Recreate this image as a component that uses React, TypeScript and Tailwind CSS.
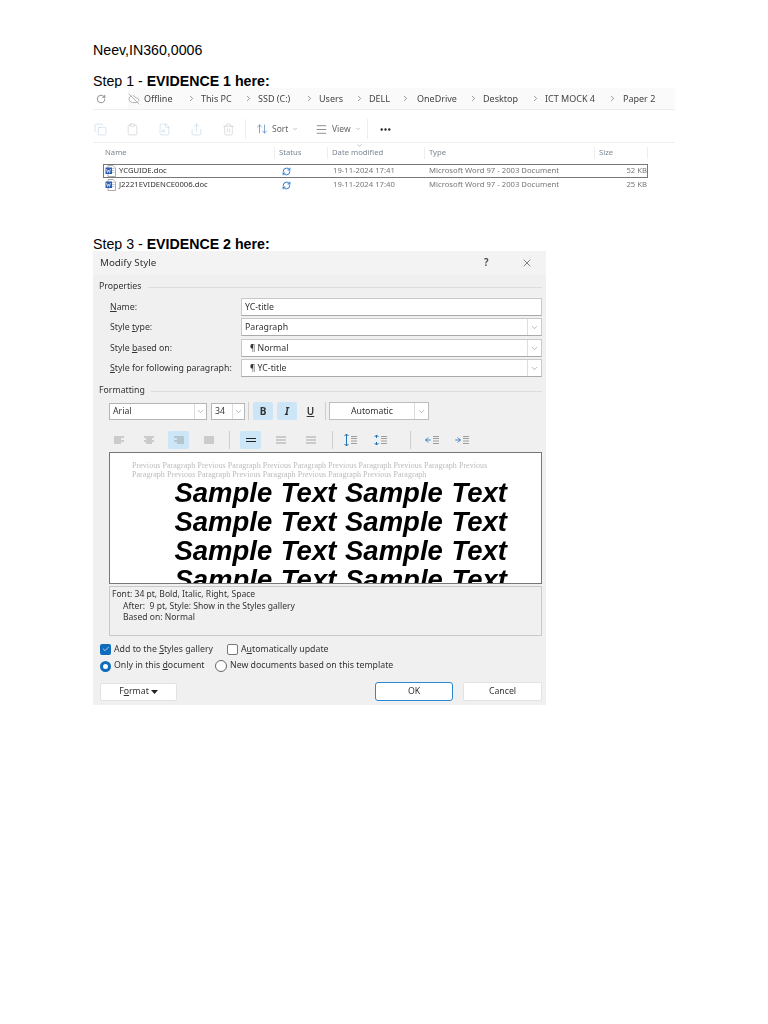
import React from "react";
import { RotateCw, CloudOff, ChevronRight, ChevronDown, Copy, Clipboard, Share, Trash2, ArrowUpDown, Menu, MoreHorizontal, RefreshCw, X, Check, FileInput, ArrowLeft, ArrowRight } from "lucide-react";

const ui = "font-['Noto_Sans','Open_Sans',sans-serif]";

function Sep() {
  return <ChevronRight className="w-[9px] h-[9px] text-[#555] shrink-0" strokeWidth={1.6} />;
}

function Crumb({ w, children }: { w: string; children: React.ReactNode }) {
  return <span className={`${w} whitespace-nowrap`}>{children}</span>;
}

function WordIcon() {
  return (
    <svg width="11" height="12" viewBox="0 0 11 12" className="shrink-0">
      <path d="M3 .5h5l2.5 2.5v8.5H3z" fill="#fff" stroke="#8a8a8a" strokeWidth="0.7" />
      <path d="M6.5 3.5h3M6.5 5.5h3M6.5 7.5h3" stroke="#9db4d8" strokeWidth="0.7" />
      <rect x="0.5" y="2.5" width="6.5" height="6.5" fill="#2b5fb5" />
      <path d="M1.5 4l1 3.5 1-2.5 1 2.5 1-3.5" stroke="#fff" strokeWidth="0.7" fill="none" />
    </svg>
  );
}

function FileRow({ name, date, size, selected }: { name: string; date: string; size: string; selected?: boolean }) {
  return (
    <div className={`grid grid-cols-[172px_53px_97px_170px_52px] items-center h-[14px] w-[545px] border ${selected ? "border-[#777]" : "border-transparent"}`}>
      <div className="flex items-center gap-[3px] pl-[1px] text-[#333]">
        <WordIcon />
        <span className="whitespace-nowrap">{name}</span>
      </div>
      <div className="pl-[6px]">
        <RefreshCw className="w-[9px] h-[9px] text-[#1c6fc9]" strokeWidth={2.4} />
      </div>
      <span className="pl-[4px] text-[#777] whitespace-nowrap">{date}</span>
      <span className="pl-[3px] text-[#777] whitespace-nowrap">Microsoft Word 97 - 2003 Document</span>
      <span className="pr-[1px] text-right text-[#777] whitespace-nowrap">{size}</span>
    </div>
  );
}

function Explorer() {
  const tool = "w-[13px] h-[13px] text-[#b9cfe6]";
  const grey = "w-[13px] h-[13px] text-[#c4c4c4]";
  return (
    <div className={`w-[582px] h-[117px] bg-white ${ui} text-[7.7px] blur-[0.25px]`}>
      <div className="flex items-center h-[22px] bg-[#fafafa] border-b border-[#eee] text-[9px] text-[#444]">
        <div className="w-[35px] pl-[3px] h-full flex items-center bg-white">
          <RotateCw className="w-[10px] h-[10px] text-[#555]" strokeWidth={1.5} />
        </div>
        <div className="flex items-center gap-[4px] w-[59px]">
          <CloudOff className="w-[12px] h-[12px] text-[#777]" strokeWidth={1} />
          <span>Offline</span>
        </div>
        <div className="w-[14px]"><Sep /></div>
        <Crumb w="w-[43px]">This PC</Crumb>
        <div className="w-[14px]"><Sep /></div>
        <Crumb w="w-[47px]">SSD (C:)</Crumb>
        <div className="w-[14px]"><Sep /></div>
        <Crumb w="w-[36px]">Users</Crumb>
        <div className="w-[14px]"><Sep /></div>
        <Crumb w="w-[32px]">DELL</Crumb>
        <div className="w-[16px]"><Sep /></div>
        <Crumb w="w-[52px]">OneDrive</Crumb>
        <div className="w-[14px]"><Sep /></div>
        <Crumb w="w-[48px]">Desktop</Crumb>
        <div className="w-[14px]"><Sep /></div>
        <Crumb w="w-[63px]">ICT MOCK 4</Crumb>
        <div className="w-[15px]"><Sep /></div>
        <Crumb w="w-[40px]">Paper 2</Crumb>
      </div>
      <div className="flex items-center h-[33px] pt-[6px] border-b border-[#eee] text-[#666] text-[8.5px]">
        <div className="flex items-center gap-[19px] pl-[1px] w-[152px]">
          <Copy className={tool} strokeWidth={1} />
          <Clipboard className={grey} strokeWidth={1} />
          <FileInput className={tool} strokeWidth={1} />
          <Share className={tool} strokeWidth={1} />
          <Trash2 className={grey} strokeWidth={1} />
        </div>
        <div className="flex items-center gap-[4px] w-[59px] pl-[10px] border-l border-[#eee] h-[20px] box-content">
          <ArrowUpDown className="w-[12px] h-[12px] text-[#2f6db5]" strokeWidth={1.2} />
          <span>Sort</span>
          <ChevronDown className="w-[6px] h-[6px] text-[#888]" />
        </div>
        <div className="flex items-center gap-[4px] w-[52px] h-[20px]">
          <Menu className="w-[13px] h-[13px] text-[#555]" strokeWidth={1.2} />
          <span>View</span>
          <ChevronDown className="w-[6px] h-[6px] text-[#888]" />
        </div>
        <div className="flex items-center pl-[11px] h-[20px] border-l border-[#eee]">
          <MoreHorizontal className="w-[13px] h-[13px] text-[#222]" strokeWidth={2.4} />
        </div>
      </div>
      <div className="relative grid grid-cols-[172px_53px_97px_170px_53px] items-center h-[20px] pl-[10px] text-[#7a8794]">
        <ChevronDown className="absolute left-[263px] -top-[1px] w-[7px] h-[7px] text-[#999]" />
        <span className="pl-[2px] border-r border-[#eee]">Name</span>
        <span className="pl-[4px] border-r border-[#eee]">Status</span>
        <span className="pl-[4px] border-r border-[#eee]">Date modified</span>
        <span className="pl-[4px] border-r border-[#eee]">Type</span>
        <span className="pl-[4px] border-r border-[#eee]">Size</span>
      </div>
      <div className="pl-[10px] pt-[1px]">
        <FileRow selected name="YCGUIDE.doc" date="19-11-2024 17:41" size="52 KB" />
        <FileRow name="J2221EVIDENCE0006.doc" date="19-11-2024 17:40" size="25 KB" />
      </div>
    </div>
  );
}

function Heading({ children }: { children: React.ReactNode }) {
  return (
    <div className="flex items-center gap-[6px] h-[12px] pl-[6px] pr-[4px] text-[#333]">
      <span>{children}</span>
      <div className="flex-1 h-px bg-[#dcdcdc]" />
    </div>
  );
}

function Caret({ w = "w-[14px]" }: { w?: string }) {
  return (
    <div className={`${w} self-stretch flex items-center justify-center bg-white border-l border-[#ddd]`}>
      <ChevronDown className="w-[9px] h-[9px] text-[#666]" strokeWidth={1.2} />
    </div>
  );
}

function PropRow({ label, value, select }: { label: React.ReactNode; value: React.ReactNode; select?: boolean }) {
  return (
    <div className="flex items-center">
      <span className="w-[148px] pl-[17px] pt-[1px] text-[#333] whitespace-nowrap">{label}</span>
      <div className="w-[301px] h-[18px] flex items-center bg-white border border-[#c9c9c9] border-b-[#aaa]">
        <span className="flex-1 pl-[3px] pt-[1px] text-[#333]">{value}</span>
        {select && <Caret />}
      </div>
    </div>
  );
}

type LineKind = "left" | "center" | "right" | "justify" | "s1" | "s2" | "s3";

function Lines({ kind }: { kind: LineKind }) {
  const rows: Record<LineKind, string> = {
    left: "M1 2h10M1 4h7M1 6h10M1 8h7",
    center: "M1 2h10M3 4h6M1 6h10M3 8h6",
    right: "M1 2h10M4 4h7M1 6h10M4 8h7",
    justify: "M1 2h10M1 4h10M1 6h10M1 8h10",
    s1: "M1 3.5h10M1 6.5h10",
    s2: "M1 2h10M1 5h10M1 8h10",
    s3: "M1 2h10M1 5h10M1 8h10",
  };
  const dark = kind === "s1" ? "#222" : "#888";
  return (
    <svg width="12" height="10" viewBox="0 0 12 10">
      <path d={rows[kind]} stroke={dark} strokeWidth={kind === "s1" ? 1.2 : 0.7} fill="none" />
    </svg>
  );
}

function Align({ kind, on }: { kind: LineKind; on?: boolean }) {
  return (
    <div className={`w-[21px] h-[18px] flex items-center justify-center rounded-[2px] ${on ? "bg-[#cde6f7]" : ""}`}>
      <Lines kind={kind} />
    </div>
  );
}

function VSep() {
  return <div className="w-px h-[18px] bg-[#cfcfcf]" />;
}

function MiniLines() {
  return (
    <svg width="8" height="10" viewBox="0 0 8 10">
      <path d="M1 1.5h6M1 3.5h6M1 6h6M1 8.5h6" stroke="#888" strokeWidth="0.8" />
    </svg>
  );
}

function Dialog() {
  return (
    <div className={`w-[453px] h-[454px] bg-[#f0f0f0] ${ui} text-[8.75px] blur-[0.25px]`}>
      <div className="flex items-center h-[24px] bg-[#f3f3f3] pl-[7px] text-[#333] text-[9.8px]">
        <span className="flex-1">Modify Style</span>
        <span className="w-[37px] font-semibold text-[#444]">?</span>
        <X className="w-[12px] h-[12px] text-[#333] mr-[13px]" strokeWidth={1.2} />
      </div>
      <div className="pt-[6px]">
        <Heading>Properties</Heading>
      </div>
      <div className="flex flex-col gap-[2px] pt-[5px]">
        <PropRow label={<><u>N</u>ame:</>} value="YC-title" />
        <div className="mb-[1px]">
          <PropRow label={<>Style <u>t</u>ype:</>} value="Paragraph" select />
        </div>
        <PropRow label={<>Style <u>b</u>ased on:</>} value={<span className="pl-[5px]"><span className="text-[8px]">¶</span> Normal</span>} select />
        <PropRow label={<><u>S</u>tyle for following paragraph:</>} value={<span className="pl-[5px]"><span className="text-[8px]">¶</span> YC-title</span>} select />
      </div>
      <div className="pt-[8px]">
        <Heading>Formatting</Heading>
      </div>
      <div className="flex items-center h-[18px] mt-[5px] ml-[16px] text-[#333]">
        <div className="flex items-center w-[98px] h-[17px] bg-white border border-[#b5b5b5]">
          <span className="flex-1 pl-[3px] pt-[1px]">Arial</span>
          <Caret w="w-[12px]" />
        </div>
        <div className="flex items-center w-[34px] h-[17px] ml-[4px] bg-white border border-[#b5b5b5]">
          <span className="flex-1 pl-[3px] pt-[1px]">34</span>
          <Caret w="w-[12px]" />
        </div>
        <div className="ml-[3px] mr-[4px]"><VSep /></div>
        <div className="w-[20px] h-[18px] bg-[#cde6f7] rounded-[2px] flex items-center justify-center font-bold text-[10px]">B</div>
        <div className="ml-[4px] w-[20px] h-[18px] bg-[#cde6f7] rounded-[2px] flex items-center justify-center font-bold italic text-[10px]">I</div>
        <div className="ml-[4px] w-[19px] h-[18px] flex items-center justify-center font-semibold text-[10px] underline">U</div>
        <div className="ml-[5px] mr-[3px]"><VSep /></div>
        <div className="flex items-center w-[100px] h-[18px] bg-white border border-[#bdbdbd]">
          <span className="flex-1 text-center pt-[1px]">Automatic</span>
          <Caret />
        </div>
      </div>
      <div className="flex items-center h-[18px] mt-[11px] ml-[15px]">
        <div className="flex items-center gap-[9px]">
          <Align kind="left" />
          <Align kind="center" />
          <Align kind="right" on />
          <Align kind="justify" />
        </div>
        <div className="ml-[10px] mr-[10px]"><VSep /></div>
        <div className="flex items-center gap-[9px]">
          <Align kind="s1" on />
          <Align kind="s2" />
          <Align kind="s3" />
        </div>
        <div className="ml-[11px]"><VSep /></div>
        <div className="flex items-center gap-[14px] ml-[10px]">
          <div className="w-[16px] flex items-center justify-center gap-px">
            <svg width="5" height="14" viewBox="0 0 5 14"><path d="M2.5 1v12M.5 3l2-2 2 2M.5 11l2 2 2-2" stroke="#1f6fb5" fill="none" /></svg>
            <MiniLines />
          </div>
          <div className="w-[16px] flex items-center justify-center gap-px">
            <svg width="5" height="12" viewBox="0 0 5 12"><path d="M2.5 1v3M2.5 8v3M.5 3l2-2 2 2M.5 9l2 2 2-2" stroke="#1f6fb5" fill="none" /></svg>
            <MiniLines />
          </div>
        </div>
        <div className="ml-[21px]"><VSep /></div>
        <div className="flex items-center gap-[14px] ml-[13px]">
          <div className="w-[16px] flex items-center"><ArrowLeft className="w-[8px] h-[8px] text-[#1f6fb5]" strokeWidth={2.5} /><MiniLines /></div>
          <div className="w-[16px] flex items-center"><ArrowRight className="w-[8px] h-[8px] text-[#1f6fb5]" strokeWidth={2.5} /><MiniLines /></div>
        </div>
      </div>
      <div className="mt-[3px] ml-[16px] w-[433px] h-[132px] bg-white border border-[#777] overflow-hidden">
        <div className="pl-[22px] pt-[8px] font-['Liberation_Serif',serif] text-[8px] leading-[9px] text-[#bbb] tracking-[0.05px] whitespace-nowrap">
          <div>Previous Paragraph Previous Paragraph Previous Paragraph Previous Paragraph Previous Paragraph Previous</div>
          <div>Paragraph Previous Paragraph Previous Paragraph Previous Paragraph Previous Paragraph</div>
        </div>
        <div className="-mt-[1px] pr-[34px] text-right font-['Liberation_Sans',Arial,sans-serif] font-bold italic text-[27.5px] leading-[29px] text-black whitespace-nowrap [word-spacing:1px]">
          <div>Sample Text Sample Text</div>
          <div>Sample Text Sample Text</div>
          <div>Sample Text Sample Text</div>
          <div>Sample Text Sample Text</div>
        </div>
      </div>
      <div className="mt-[2px] ml-[16px] w-[433px] h-[50px] border border-[#c9c9c9] pl-[2px] pt-[2px] text-[8.55px] leading-[11.5px] text-[#333]">
        <div>Font: 34 pt, Bold, Italic, Right, Space</div>
        <div className="pl-[11px] whitespace-pre">After:  9 pt, Style: Show in the Styles gallery</div>
        <div className="pl-[11px]">Based on: Normal</div>
      </div>
      <div className="flex items-center h-[12px] mt-[7px] ml-[7px] text-[#333]">
        <div className="w-[11px] h-[11px] rounded-[2px] bg-[#0f6cbd] flex items-center justify-center">
          <Check className="w-[8px] h-[8px] text-white" strokeWidth={2} />
        </div>
        <span className="ml-[3px] pt-[1px] w-[113px] whitespace-nowrap">Add to the <u>S</u>tyles gallery</span>
        <div className="w-[11px] h-[11px] rounded-[2px] bg-white border border-[#777]" />
        <span className="ml-[3px] pt-[1px] whitespace-nowrap">A<u>u</u>tomatically update</span>
      </div>
      <div className="flex items-center h-[12px] mt-[5px] ml-[7px] text-[#333]">
        <div className="w-[11px] h-[11px] rounded-full bg-white border-[3.5px] border-[#0f6cbd]" />
        <span className="ml-[3px] w-[101px] whitespace-nowrap">Only in this <u>d</u>ocument</span>
        <div className="w-[12px] h-[12px] rounded-full bg-white border border-[#666]" />
        <span className="ml-[3px] whitespace-nowrap">New documents based on this template</span>
      </div>
      <div className="flex items-center mt-[10px] ml-[7px] text-[#333]">
        <button className="w-[77px] h-[18px] bg-white border border-[#e2e2e2] rounded-[2px] flex items-center justify-center gap-[2px]">
          <span className="pt-[1px]">F<u>o</u>rmat</span>
          <svg width="7" height="4" viewBox="0 0 7 4"><path d="M0 0h7L3.5 4z" fill="#222" /></svg>
        </button>
        <button className="ml-[198px] w-[78px] h-[19px] pt-[1px] bg-white border border-[#2a87d0] rounded-[3px] flex items-center justify-center">OK</button>
        <button className="ml-[10px] w-[79px] h-[19px] pt-[1px] bg-white border border-[#e2e2e2] rounded-[2px] flex items-center justify-center">Cancel</button>
      </div>
    </div>
  );
}

export default function App() {
  return (
    <div className="w-[768px] h-[1024px] bg-white pl-[93px] pt-[42px] font-['Liberation_Sans',Arial,sans-serif] text-[14.2px] text-black">
      <div className="leading-[17px]">Neev,IN360,0006</div>
      <div className="mt-[14px] leading-[17px] h-[15px]">Step 1 - <b>EVIDENCE 1 here:</b></div>
      <Explorer />
      <div className="mt-[31px] leading-[17px] h-[15px]">Step 3 - <b>EVIDENCE 2 here:</b></div>
      <Dialog />
    </div>
  );
}
